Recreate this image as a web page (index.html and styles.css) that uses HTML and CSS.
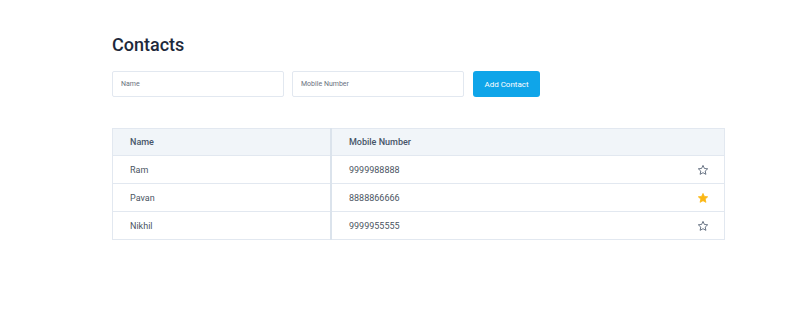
FILE: index.html
```html
<!DOCTYPE html>
<html>
<head>
    <title>Contacts</title>
    <link rel="stylesheet" href="styles.css">
</head>
<body>
    <div class="app">
        <h1 class="title">Contacts</h1>
        <form class="add-form">
            <input class="field" type="text" placeholder="Name">
            <input class="field" type="text" placeholder="Mobile Number">
            <button class="add-btn" type="button">Add Contact</button>
        </form>

        <table class="contacts">
            <thead>
                <tr>
                    <th class="col-name">Name</th>
                    <th>Mobile Number</th>
                </tr>
            </thead>
            <tbody>
                <tr>
                    <td class="col-name">Ram</td>
                    <td><div class="cell-row"><span>9999988888</span>
                        <svg class="star" viewBox="0 0 24 24"><path d="M12 2.8l2.8 6.1 6.6.7-5 4.5 1.4 6.6L12 17.4l-5.8 3.3 1.4-6.6-5-4.5 6.6-.7z"/></svg>
                    </div></td>
                </tr>
                <tr>
                    <td class="col-name">Pavan</td>
                    <td><div class="cell-row"><span>8888866666</span>
                        <svg class="star starred" viewBox="0 0 24 24"><path d="M12 2.8l2.8 6.1 6.6.7-5 4.5 1.4 6.6L12 17.4l-5.8 3.3 1.4-6.6-5-4.5 6.6-.7z"/></svg>
                    </div></td>
                </tr>
                <tr>
                    <td class="col-name">Nikhil</td>
                    <td><div class="cell-row"><span>9999955555</span>
                        <svg class="star" viewBox="0 0 24 24"><path d="M12 2.8l2.8 6.1 6.6.7-5 4.5 1.4 6.6L12 17.4l-5.8 3.3 1.4-6.6-5-4.5 6.6-.7z"/></svg>
                    </div></td>
                </tr>
            </tbody>
        </table>
    </div>
</body>
</html>
```

FILE: styles.css
```css
body {
    margin: 0;
    background-color: #fff;
    font-family: Roboto, "Liberation Sans", sans-serif;
}

.app {
    width: 613px;
    padding: 33px 0 0 112px;
}

.title {
    margin: 0;
    font-size: 18px;
    font-weight: 500;
    color: #1e293b;
    line-height: 24px;
}

.add-form {
    display: flex;
    gap: 8px;
    margin-top: 14px;
}

.field {
    width: 172px;
    height: 26px;
    box-sizing: border-box;
    border: 1px solid #e2e8f0;
    border-radius: 2px;
    padding: 0 8px;
    font-family: inherit;
    font-size: 7px;
    color: #334155;
}

.field::placeholder {
    color: #6b7280;
}

.add-btn {
    width: 67px;
    height: 26px;
    margin-left: 1px;
    border: none;
    border-radius: 3px;
    background-color: #0fa5e9;
    color: #fff;
    font-family: inherit;
    font-size: 8px;
    font-weight: 400;
    cursor: pointer;
}

.contacts {
    width: 613px;
    margin-top: 31px;
    border-collapse: collapse;
    border: 1px solid #e2e8f0;
    font-size: 9px;
}

.contacts th {
    height: 26px;
    background-color: #f1f5f9;
    color: #475569;
    font-weight: 500;
    text-align: left;
    padding: 0 17px;
    border-bottom: 1px solid #e2e8f0;
}

.contacts td {
    height: 27px;
    color: #4b5563;
    padding: 0 17px;
    border-bottom: 1px solid #e2e8f0;
}

.contacts td:last-child {
    padding-right: 15px;
}

.contacts .col-name {
    width: 183px;
    border-right: 2px solid #dbe3ec;
}

.cell-row {
    display: flex;
    align-items: center;
    justify-content: space-between;
}

.star {
    width: 12px;
    height: 12px;
    fill: none;
    stroke: #475569;
    stroke-width: 1.6;
    stroke-linejoin: round;
}

.star.starred {
    fill: #fbb714;
    stroke: #fbb714;
}
```
